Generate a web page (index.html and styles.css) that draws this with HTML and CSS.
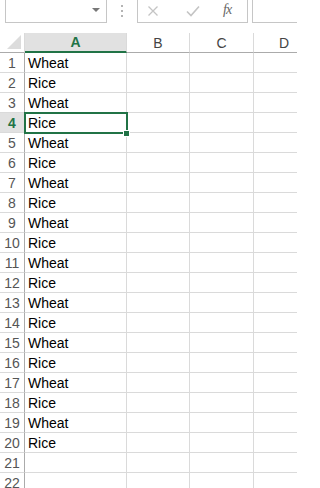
FILE: index.html
```html
<!DOCTYPE html>
<html>
<head>
<meta charset="utf-8">
<link rel="stylesheet" href="styles.css">
</head>
<body>
<div class="toolbar">
  <div class="namebox">
    <svg class="dd" width="8" height="5" viewBox="0 0 8 5"><path d="M0 0H8L4 4Z" fill="#777"/></svg>
  </div>
  <div class="dots">
    <svg width="3" height="12" viewBox="0 0 3 12"><rect x="0" y="0" width="2" height="2" fill="#b4b4b4"/><rect x="0" y="5" width="2" height="2" fill="#b4b4b4"/><rect x="0" y="10" width="2" height="2" fill="#b4b4b4"/></svg>
  </div>
  <div class="fbtns">
    <svg class="ic" width="12" height="12" viewBox="0 0 12 12"><path d="M1.5 1.5L10.5 10.5M10.5 1.5L1.5 10.5" stroke="#c4c4c4" stroke-width="1.3"/></svg>
    <svg class="ic" width="14" height="12" viewBox="0 0 14 12"><path d="M1 6.5L5 10.5L13 1.5" stroke="#c4c4c4" stroke-width="1.6" fill="none"/></svg>
    <span class="fx">fx</span>
  </div>
  <div class="finput"></div>
</div>
<div class="grid">
  <div class="corner"><svg width="14" height="14" viewBox="0 0 14 14"><path d="M14 0V14H0Z" fill="#dcdcdc"/></svg></div>
  <div class="ch sel">A</div>
  <div class="ch">B</div>
  <div class="ch">C</div>
  <div class="ch last">D</div>

  <div class="rh">1</div><div class="c">Wheat</div><div class="c"></div><div class="c"></div><div class="c last"></div>
  <div class="rh">2</div><div class="c">Rice</div><div class="c"></div><div class="c"></div><div class="c last"></div>
  <div class="rh">3</div><div class="c">Wheat</div><div class="c"></div><div class="c"></div><div class="c last"></div>
  <div class="rh active">4</div><div class="c cur">Rice<span class="handle"></span></div><div class="c"></div><div class="c"></div><div class="c last"></div>
  <div class="rh">5</div><div class="c">Wheat</div><div class="c"></div><div class="c"></div><div class="c last"></div>
  <div class="rh">6</div><div class="c">Rice</div><div class="c"></div><div class="c"></div><div class="c last"></div>
  <div class="rh">7</div><div class="c">Wheat</div><div class="c"></div><div class="c"></div><div class="c last"></div>
  <div class="rh">8</div><div class="c">Rice</div><div class="c"></div><div class="c"></div><div class="c last"></div>
  <div class="rh">9</div><div class="c">Wheat</div><div class="c"></div><div class="c"></div><div class="c last"></div>
  <div class="rh">10</div><div class="c">Rice</div><div class="c"></div><div class="c"></div><div class="c last"></div>
  <div class="rh">11</div><div class="c">Wheat</div><div class="c"></div><div class="c"></div><div class="c last"></div>
  <div class="rh">12</div><div class="c">Rice</div><div class="c"></div><div class="c"></div><div class="c last"></div>
  <div class="rh">13</div><div class="c">Wheat</div><div class="c"></div><div class="c"></div><div class="c last"></div>
  <div class="rh">14</div><div class="c">Rice</div><div class="c"></div><div class="c"></div><div class="c last"></div>
  <div class="rh">15</div><div class="c">Wheat</div><div class="c"></div><div class="c"></div><div class="c last"></div>
  <div class="rh">16</div><div class="c">Rice</div><div class="c"></div><div class="c"></div><div class="c last"></div>
  <div class="rh">17</div><div class="c">Wheat</div><div class="c"></div><div class="c"></div><div class="c last"></div>
  <div class="rh">18</div><div class="c">Rice</div><div class="c"></div><div class="c"></div><div class="c last"></div>
  <div class="rh">19</div><div class="c">Wheat</div><div class="c"></div><div class="c"></div><div class="c last"></div>
  <div class="rh">20</div><div class="c">Rice</div><div class="c"></div><div class="c"></div><div class="c last"></div>
  <div class="rh">21</div><div class="c"></div><div class="c"></div><div class="c"></div><div class="c last"></div>
  <div class="rh">22</div><div class="c"></div><div class="c"></div><div class="c"></div><div class="c last"></div>
</div>
</body>
</html>
```
FILE: styles.css
```css
html, body {
  margin: 0;
  padding: 0;
  background: #fff;
  overflow: hidden;
}
body {
  width: 297px;
  height: 488px;
  font-family: "Liberation Sans", Arial, sans-serif;
}
.toolbar {
  display: flex;
  height: 23px;
  box-sizing: border-box;
}
.namebox {
  margin-left: 5px;
  width: 102px;
  height: 23px;
  box-sizing: border-box;
  border: 1px solid #c6c6c6;
  border-top: none;
  display: flex;
  justify-content: flex-end;
  align-items: flex-start;
}
.dd {
  margin: 8px 6px 0 0;
}
.dots {
  width: 30px;
  display: flex;
  justify-content: center;
  padding-top: 5px;
  box-sizing: border-box;
}
.fbtns {
  width: 111px;
  height: 23px;
  box-sizing: border-box;
  border: 1px solid #c6c6c6;
  border-top: none;
  display: flex;
  align-items: center;
  padding-left: 9px;
}
.ic {
  display: block;
}
.fbtns .ic:first-child {
  margin-right: 27px;
}
.fbtns .ic:nth-child(2) {
  margin-right: 23px;
}
.fx {
  font-family: "Liberation Serif", "Times New Roman", serif;
  font-style: italic;
  font-size: 14px;
  color: #666;
  letter-spacing: -1px;
  margin-top: -2px;
}
.finput {
  flex: 1;
  margin-left: 4px;
  height: 23px;
  box-sizing: border-box;
  border: 1px solid #c6c6c6;
  border-top: none;
  border-right: none;
}
.grid {
  margin-top: 10px;
  display: grid;
  grid-template-columns: 25px 102px 63px 64px 60px;
  grid-auto-rows: 20px;
  width: 297px;
  overflow: hidden;
}
.grid > div {
  box-sizing: border-box;
  border-right: 1px solid #dadada;
  border-bottom: 1px solid #dadada;
}
.grid > .last {
  border-right: none;
}
.corner {
  display: flex;
  align-items: flex-end;
  justify-content: flex-end;
  padding: 0 3px 3px 0;
  border-bottom: 1px solid #ababab !important;
  border-right: 1px solid #dadada !important;
}
.ch {
  display: flex;
  align-items: center;
  justify-content: center;
  font-size: 14px;
  color: #444;
  border-bottom: 1px solid #ababab !important;
}
.ch.sel {
  background: #e1e1e1;
  color: #217346;
  font-weight: bold;
  border-bottom: 2px solid #217346 !important;
}
.rh {
  display: flex;
  align-items: center;
  justify-content: center;
  font-size: 14px;
  color: #555;
  border-right: 1px solid #ababab !important;
}
.rh.active {
  background: #e1e1e1;
  color: #217346;
  font-weight: bold;
}
.c {
  display: flex;
  align-items: center;
  padding-left: 3px;
  font-size: 14px;
  color: #000;
}
.cur {
  position: relative;
}
.cur::after {
  content: "";
  position: absolute;
  left: -1px;
  top: -1px;
  right: -2px;
  bottom: -2px;
  border: 2px solid #217346;
}
.handle {
  position: absolute;
  right: -4px;
  bottom: -5px;
  width: 5px;
  height: 5px;
  background: #217346;
  border: 1px solid #fff;
  z-index: 2;
}
```
